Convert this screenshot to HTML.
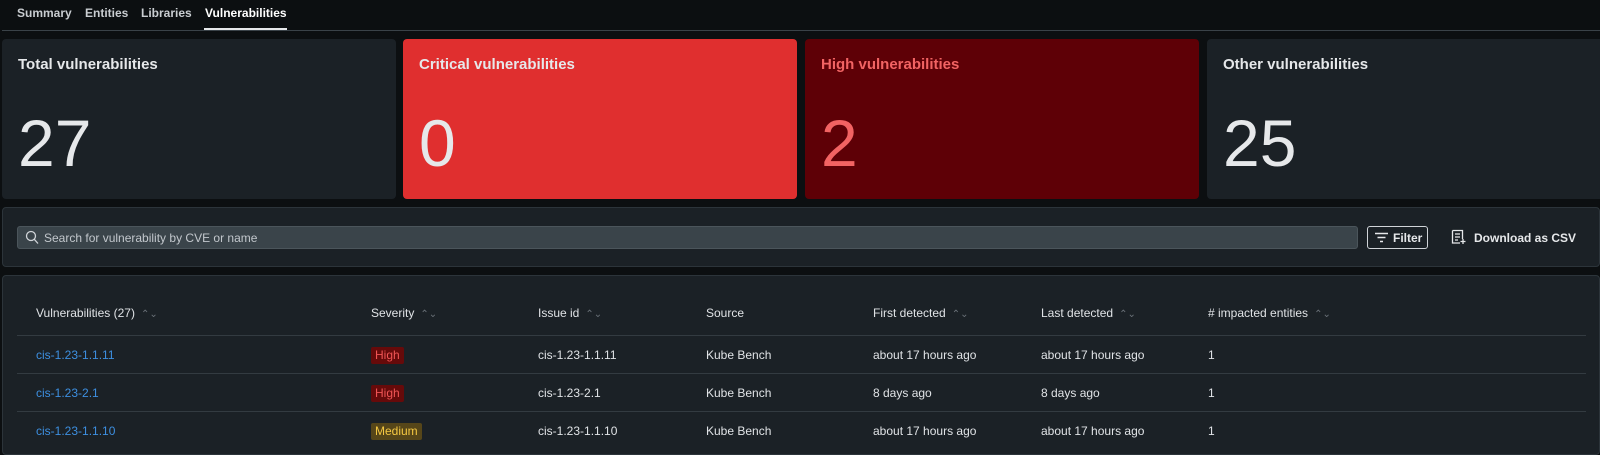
<!DOCTYPE html>
<html><head><meta charset="utf-8"><style>
*{box-sizing:border-box;margin:0;padding:0}
body{width:1600px;height:448px;overflow:hidden;background:#0c0f11;font-family:"Liberation Sans",sans-serif;color:#e6e8ea;position:relative}
.a{position:absolute}
.nav span{position:absolute;top:6px;font-size:12px;font-weight:bold;color:#c9cdd1}
.card{position:absolute;top:39px;height:160px;width:394px;border-radius:4px;background:#1b2126}
.card h3{position:absolute;left:16px;top:17px;font-size:15px;font-weight:bold}
.card .n{position:absolute;left:16px;top:66px;font-size:66px;font-weight:normal}
.th{position:absolute;top:306px;font-size:12px;color:#e0e3e6}
.td{position:absolute;font-size:12px;color:#e0e3e6}
.sort{color:#6a7178;font-size:10px;margin-left:6px}
.lnk{color:#3d8fe0}
.b{display:inline-block;padding:2px 4px;border-radius:2px;font-size:12px;line-height:13px}
.hl{position:absolute;left:17px;width:1569px;height:1px;background:#333b41}
</style></head><body>
<div class="nav">
<span style="left:17px">Summary</span><span style="left:85px">Entities</span><span style="left:141px">Libraries</span><span style="left:205px;color:#fff">Vulnerabilities</span>
</div>
<div class="a" style="left:2px;top:30px;width:1598px;height:1px;background:#3a4248"></div>
<div class="a" style="left:204px;top:28px;width:83px;height:2px;background:#e6e8ea"></div>

<div class="card" style="left:2px"><h3>Total vulnerabilities</h3><div class="n">27</div></div>
<div class="card" style="left:403px;background:#e02f2f"><h3>Critical vulnerabilities</h3><div class="n">0</div></div>
<div class="card" style="left:805px;background:#5e0006"><h3 style="color:#f26363">High vulnerabilities</h3><div class="n" style="color:#f26363">2</div></div>
<div class="card" style="left:1207px;width:400px"><h3>Other vulnerabilities</h3><div class="n">25</div></div>

<div class="a" style="left:2px;top:207px;width:1598px;height:60px;background:#1b2126;border:1px solid #2c343a;border-radius:4px"></div>
<div class="a" style="left:17px;top:226px;width:1341px;height:23px;background:#3a444a;border:1px solid #4b555b;border-radius:3px"></div>
<svg class="a" style="left:25px;top:230px" width="14" height="15" viewBox="0 0 14 15"><circle cx="6" cy="6" r="4.5" fill="none" stroke="#d0d4d8" stroke-width="1.3"/><path d="M9.3 9.3L13 13.5" stroke="#d0d4d8" stroke-width="1.3"/></svg>
<div class="a" style="left:44px;top:231px;font-size:12px;color:#c2c7cc">Search for vulnerability by CVE or name</div>
<div class="a" style="left:1367px;top:226px;width:61px;height:23px;border:1.5px solid #d0d4d8;border-radius:3px"></div>
<svg class="a" style="left:1374px;top:232px" width="15" height="11" viewBox="0 0 15 11"><path d="M1 1.5H14M3.5 5.5H11.5M6 9.5H9" stroke="#e6e8ea" stroke-width="1.4"/></svg>
<div class="a" style="left:1393px;top:231px;font-size:12px;font-weight:bold">Filter</div>
<svg class="a" style="left:1451px;top:229px" width="15" height="16" viewBox="0 0 15 16"><path d="M1.5 1.5H11.5V10M9 14H1.5V1.5M4 5H9M4 8H9M4 11H7M12 10V15M9.5 12.5H14.5" fill="none" stroke="#e6e8ea" stroke-width="1.3"/></svg>
<div class="a" style="left:1474px;top:231px;font-size:12px;font-weight:bold">Download as CSV</div>

<div class="a" style="left:2px;top:275px;width:1598px;height:180px;background:#1b2126;border:1px solid #2c343a;border-radius:4px"></div>
<div class="th" style="left:36px">Vulnerabilities (27)<span class="sort">⌃⌄</span></div>
<div class="th" style="left:371px">Severity<span class="sort">⌃⌄</span></div>
<div class="th" style="left:538px">Issue id<span class="sort">⌃⌄</span></div>
<div class="th" style="left:706px">Source</div>
<div class="th" style="left:873px">First detected<span class="sort">⌃⌄</span></div>
<div class="th" style="left:1041px">Last detected<span class="sort">⌃⌄</span></div>
<div class="th" style="left:1208px"># impacted entities<span class="sort">⌃⌄</span></div>
<div class="hl" style="top:335px"></div><div class="hl" style="top:373px"></div><div class="hl" style="top:411px"></div>

<div class="td lnk" style="left:36px;top:348px">cis-1.23-1.1.11</div>
<div class="td" style="left:371px;top:347px"><span class="b" style="background:#660a0a;color:#f05555">High</span></div>
<div class="td" style="left:538px;top:348px">cis-1.23-1.1.11</div>
<div class="td" style="left:706px;top:348px">Kube Bench</div>
<div class="td" style="left:873px;top:348px">about 17 hours ago</div>
<div class="td" style="left:1041px;top:348px">about 17 hours ago</div>
<div class="td" style="left:1208px;top:348px">1</div>

<div class="td lnk" style="left:36px;top:386px">cis-1.23-2.1</div>
<div class="td" style="left:371px;top:385px"><span class="b" style="background:#660a0a;color:#f05555">High</span></div>
<div class="td" style="left:538px;top:386px">cis-1.23-2.1</div>
<div class="td" style="left:706px;top:386px">Kube Bench</div>
<div class="td" style="left:873px;top:386px">8 days ago</div>
<div class="td" style="left:1041px;top:386px">8 days ago</div>
<div class="td" style="left:1208px;top:386px">1</div>

<div class="td lnk" style="left:36px;top:424px">cis-1.23-1.1.10</div>
<div class="td" style="left:371px;top:423px"><span class="b" style="background:#564619;color:#f5c842">Medium</span></div>
<div class="td" style="left:538px;top:424px">cis-1.23-1.1.10</div>
<div class="td" style="left:706px;top:424px">Kube Bench</div>
<div class="td" style="left:873px;top:424px">about 17 hours ago</div>
<div class="td" style="left:1041px;top:424px">about 17 hours ago</div>
<div class="td" style="left:1208px;top:424px">1</div>
</body></html>
